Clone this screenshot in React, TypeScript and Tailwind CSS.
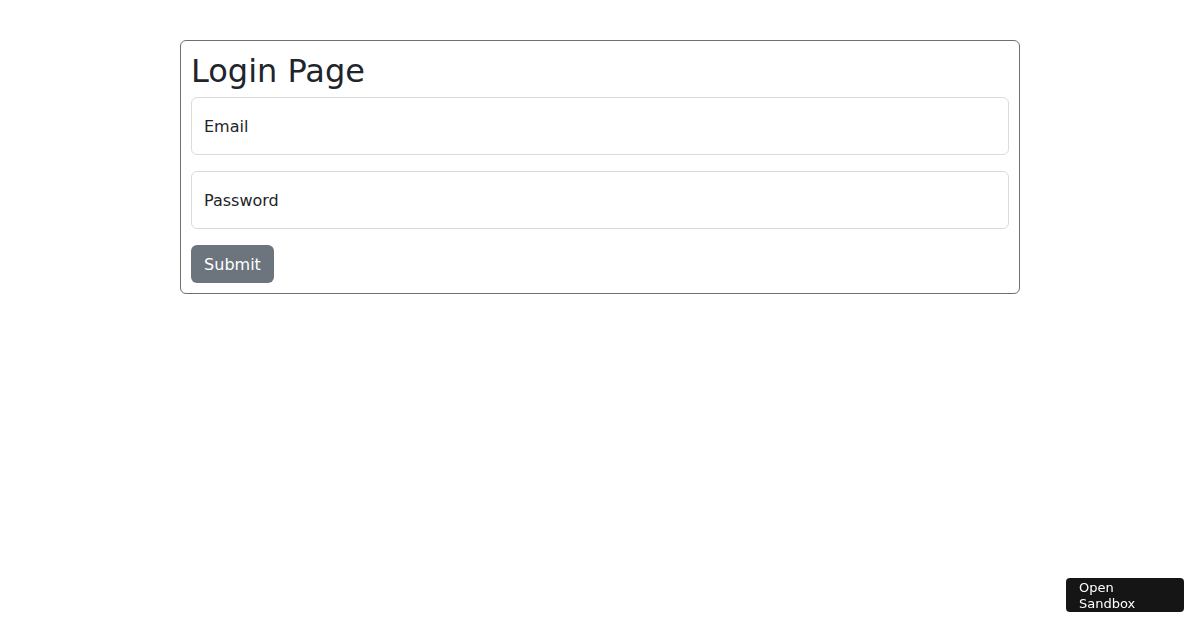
import React from "react";

export default function App() {
  return (
    <div
      className="min-h-[630px] bg-white text-[#212529]"
      style={{ fontFamily: '"DejaVu Sans", sans-serif' }}
    >
      <div className="pt-10">
        <div className="mx-auto w-[840px] rounded-[6px] border border-[#6f6f6f] p-[10px]">
          <h2 className="mb-2 h-[38px] pt-px text-[32px] font-normal leading-[38px]">Login Page</h2>
          <div className="mb-4 flex h-[58px] items-center rounded-[6px] border border-[#d8dce0] px-3 pt-px text-[16px]">
            Email
          </div>
          <div className="mb-4 flex h-[58px] items-center rounded-[6px] border border-[#d8dce0] px-3 pt-px text-[16px]">
            Password
          </div>
          <button className="flex h-[38px] w-[83px] items-center justify-center rounded-[6px] bg-[#6c757d] pt-px text-[16px] leading-6 text-white">
            Submit
          </button>
        </div>
      </div>
      <div className="fixed bottom-[18px] right-4 h-[34px] w-[118px] rounded-[4px] bg-[#151515] px-[13px] pt-[2px] text-[13px] leading-4 text-white">
        Open
        <br />
        Sandbox
      </div>
    </div>
  );
}
